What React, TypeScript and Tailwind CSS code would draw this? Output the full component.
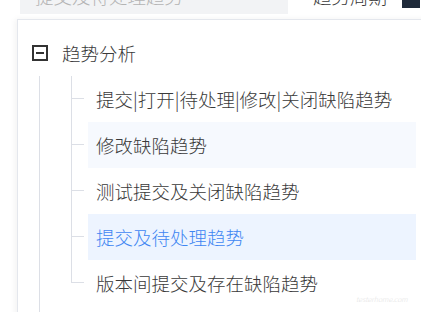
import React from "react";

const items = [
  { label: "提交|打开|待处理|修改|关闭缺陷趋势", state: "none" },
  { label: "修改缺陷趋势", state: "hover" },
  { label: "测试提交及关闭缺陷趋势", state: "none" },
  { label: "提交及待处理趋势", state: "active" },
  { label: "版本间提交及存在缺陷趋势", state: "none" },
];

export default function App() {
  return (
    <div
      className="relative w-[421px] h-[312px] overflow-hidden bg-white text-[#3a3a3a] font-light"
      style={{ fontFamily: '"Noto Sans CJK SC", "Noto Sans", sans-serif' }}
    >
      {/* clipped filter bar above the dropdown */}
      <div className="flex h-[35px] -mt-[21px] items-center">
        <div className="ml-[20px] w-[268px] h-full flex items-center px-[15px] bg-[#f2f3f5] text-[18.5px] text-[#b4b4b4] leading-none">
          提交及待处理趋势
        </div>
        <div className="ml-[25px] text-[18.5px] leading-none">趋势周期</div>
        <div className="ml-[15px] w-[18px] h-[22px] bg-[#1f2a3a]" />
      </div>

      {/* dropdown panel */}
      <div className="mt-[5px] ml-[17px] w-[420px] h-[320px] bg-white border-l border-t border-[#e4e7ed] shadow-[-2px_0_6px_rgba(0,0,0,0.05)]">
        <div className="mt-[13px] h-[40px] flex items-center pl-[14px]">
          <div className="w-[16px] h-[16px] border-2 border-[#333] flex items-center justify-center">
            <div className="w-[8px] h-[2px] bg-[#333]" />
          </div>
          <span className="ml-[14px] text-[18.5px] leading-none">趋势分析</span>
        </div>

        <div className="mt-[3px] ml-[21px] border-l border-[#dcdfe6] pb-[20px]">
          <div className="ml-[31px] flex flex-col">
            {items.map((item, idx) => {
              const last = idx === items.length - 1;
              return (
                <div key={item.label} className="flex h-[46px]">
                  <div className="w-[13px] flex flex-col">
                    <div className="h-[23px] border-l border-b border-[#dcdfe6]" />
                    <div className={`flex-1 ${last ? "" : "border-l border-[#dcdfe6]"}`} />
                  </div>
                  <div
                    className={`ml-[4px] w-[328px] flex items-center px-[8px] text-[18.5px] leading-none whitespace-nowrap ${
                      item.state === "active"
                        ? "bg-[#edf4ff] text-[#3f86f2]"
                        : item.state === "hover"
                        ? "bg-[#f6f9fe]"
                        : ""
                    }`}
                  >
                    {item.label}
                  </div>
                </div>
              );
            })}
          </div>
        </div>
      </div>

      <span className="absolute left-[356px] top-[294px] text-[7px] italic text-[#e2e2e2]">testerhome.com</span>
    </div>
  );
}
